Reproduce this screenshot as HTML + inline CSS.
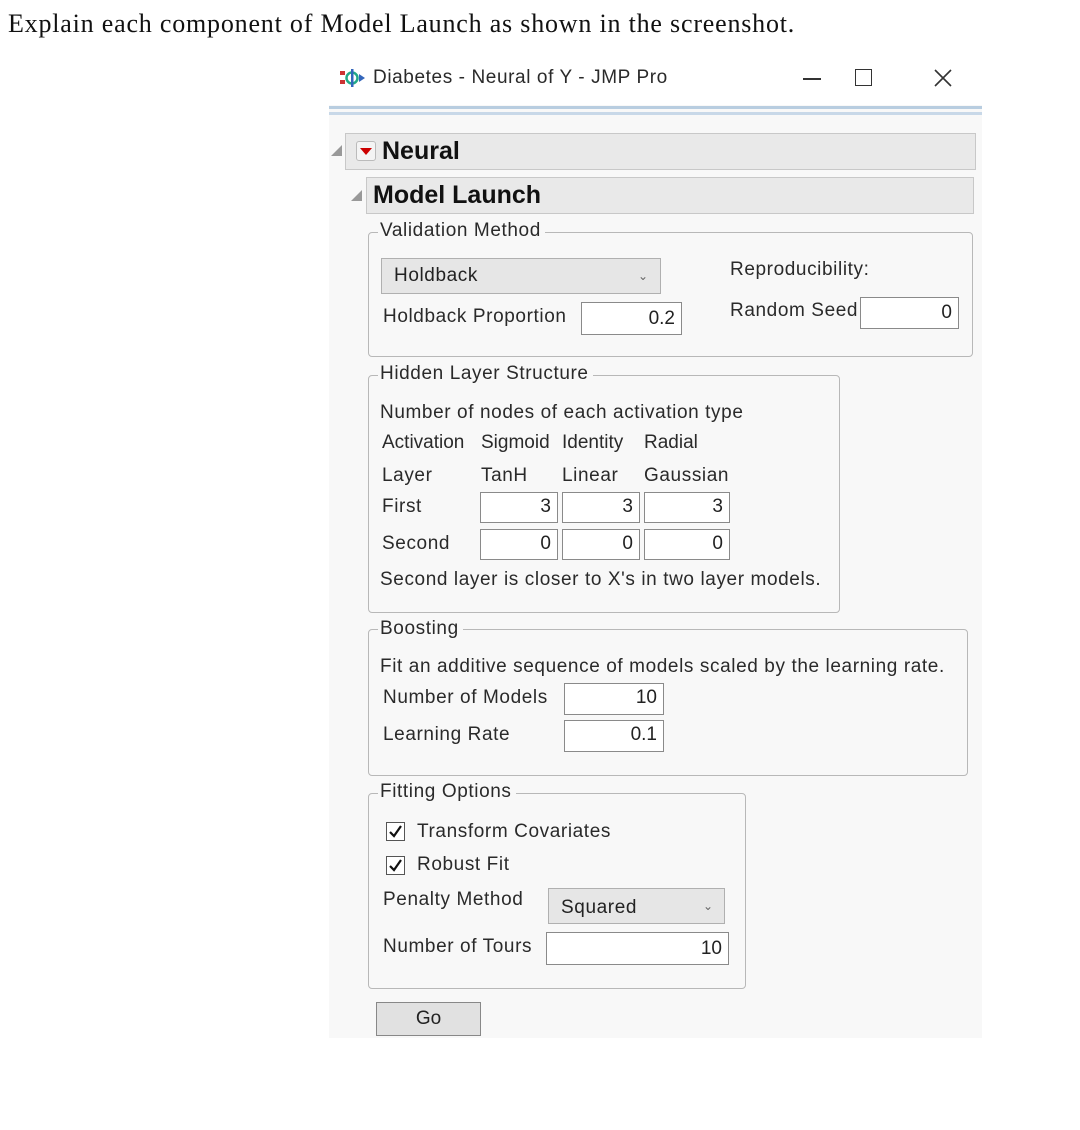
<!DOCTYPE html>
<html><head><meta charset="utf-8"><style>
body{margin:0;width:1080px;height:1130px;background:#fff;position:relative;overflow:hidden;font-family:"Liberation Sans",sans-serif;color:#222}
.a{position:absolute}
.t{position:absolute;font-size:19px;letter-spacing:0.6px;line-height:20px;white-space:nowrap;color:#2a2a2a}
.box{position:absolute;border:1px solid #b8b8b8;border-radius:4px}
.lbl{position:absolute;font-size:19px;letter-spacing:0.6px;line-height:20px;background:#f8f8f8;padding:0 4px 0 2px;white-space:nowrap;color:#2a2a2a}
.in{position:absolute;background:#fff;border:1px solid #8a8a8a;box-sizing:border-box;font-size:19px;text-align:right;padding-right:6px;line-height:28px;color:#222}
.dd{position:absolute;background:#e6e6e6;border:1px solid #b0b0b0;box-sizing:border-box;font-size:19px;letter-spacing:0.6px;padding-left:12px;color:#222}
.hdr{position:absolute;background:#e9e9e9;border:1px solid #c8c8c8;box-sizing:border-box;font-weight:bold;font-size:24px;color:#111}
.cb{position:absolute;width:19px;height:19px;border:1px solid #555;background:#fff;box-sizing:border-box}
.tri{position:absolute;width:0;height:0;border-left:11px solid transparent;border-bottom:11px solid #999}
</style></head><body>
<div class="a" style="left:8px;top:9px;font-family:'Liberation Serif',serif;font-size:26px;letter-spacing:0.8px;color:#111;white-space:nowrap">Explain each component of Model Launch as shown in the screenshot.</div>

<div class="a" style="left:329px;top:58px;width:653px;height:980px;background:#f8f8f8"></div>
<div class="a" style="left:329px;top:58px;width:653px;height:47px;background:#fff"></div>
<svg class="a" style="left:338px;top:66px" width="28" height="24" viewBox="0 0 28 24"><rect x="2" y="5" width="5" height="4" fill="#c33"/><rect x="2" y="14" width="5" height="4" fill="#c33"/><circle cx="14" cy="12" r="5.5" fill="none" stroke="#2a8" stroke-width="2.5"/><rect x="13" y="3" width="2.5" height="18" fill="#36b"/><polygon points="21,8 27,12 21,16" fill="#36b"/></svg>
<div class="t" style="left:373px;top:68px">Diabetes - Neural of Y - JMP Pro</div>
<div class="a" style="left:803px;top:78px;width:18px;height:2px;background:#333"></div>
<div class="a" style="left:855px;top:69px;width:17px;height:17px;border:1.5px solid #333;box-sizing:border-box"></div>
<svg class="a" style="left:933px;top:68px" width="20" height="20"><path d="M2 2L18 18M18 2L2 18" stroke="#333" stroke-width="1.6"/></svg>
<div class="a" style="left:329px;top:106px;width:653px;height:3px;background:#b8cde0"></div>
<div class="a" style="left:329px;top:112px;width:653px;height:3px;background:#c8d8e8"></div>

<div class="tri" style="left:331px;top:145px"></div>
<div class="hdr" style="left:345px;top:133px;width:631px;height:37px"></div>
<div class="a" style="left:356px;top:141px;width:20px;height:20px;border:1px solid #bbb;border-radius:3px;background:#f4f4f4;box-sizing:border-box"></div>
<div class="a" style="left:360px;top:148px;width:0;height:0;border-left:6px solid transparent;border-right:6px solid transparent;border-top:7px solid #c00"></div>
<div class="a" style="left:382px;top:137px;font-weight:bold;font-size:25px;color:#111">Neural</div>

<div class="tri" style="left:351px;top:190px"></div>
<div class="hdr" style="left:366px;top:177px;width:608px;height:37px"></div>
<div class="a" style="left:373px;top:181px;font-weight:bold;font-size:25px;color:#111">Model Launch</div>

<div class="box" style="left:368px;top:232px;width:603px;height:123px"></div>
<div class="lbl" style="left:378px;top:221px">Validation Method</div>
<div class="dd" style="left:381px;top:258px;width:280px;height:36px;line-height:34px">Holdback<span style="position:absolute;left:256px;font-size:12px;color:#666">&#8964;</span></div>
<div class="t" style="left:730px;top:260px">Reproducibility:</div>
<div class="t" style="left:383px;top:307px">Holdback Proportion</div>
<div class="in" style="left:581px;top:302px;width:101px;height:33px;line-height:31px">0.2</div>
<div class="t" style="left:730px;top:301px">Random Seed</div>
<div class="in" style="left:860px;top:297px;width:99px;height:32px;line-height:30px">0</div>

<div class="box" style="left:368px;top:375px;width:470px;height:236px"></div>
<div class="lbl" style="left:378px;top:364px">Hidden Layer Structure</div>
<div class="t" style="left:380px;top:403px">Number of nodes of each activation type</div>
<div class="t" style="left:382px;top:433px;letter-spacing:0">Activation</div>
<div class="t" style="left:481px;top:433px;letter-spacing:0">Sigmoid</div>
<div class="t" style="left:562px;top:433px;letter-spacing:0">Identity</div>
<div class="t" style="left:644px;top:433px;letter-spacing:0">Radial</div>
<div class="t" style="left:382px;top:466px">Layer</div>
<div class="t" style="left:481px;top:466px">TanH</div>
<div class="t" style="left:562px;top:466px">Linear</div>
<div class="t" style="left:644px;top:466px">Gaussian</div>
<div class="t" style="left:382px;top:497px">First</div>
<div class="in" style="left:480px;top:492px;width:78px;height:31px">3</div>
<div class="in" style="left:562px;top:492px;width:78px;height:31px">3</div>
<div class="in" style="left:644px;top:492px;width:86px;height:31px">3</div>
<div class="t" style="left:382px;top:534px">Second</div>
<div class="in" style="left:480px;top:529px;width:78px;height:31px">0</div>
<div class="in" style="left:562px;top:529px;width:78px;height:31px">0</div>
<div class="in" style="left:644px;top:529px;width:86px;height:31px">0</div>
<div class="t" style="left:380px;top:570px">Second layer is closer to X's in two layer models.</div>

<div class="box" style="left:368px;top:629px;width:598px;height:145px"></div>
<div class="lbl" style="left:378px;top:619px">Boosting</div>
<div class="t" style="left:380px;top:657px">Fit an additive sequence of models scaled by the learning rate.</div>
<div class="t" style="left:383px;top:688px">Number of Models</div>
<div class="in" style="left:564px;top:683px;width:100px;height:32px">10</div>
<div class="t" style="left:383px;top:725px">Learning Rate</div>
<div class="in" style="left:564px;top:720px;width:100px;height:32px">0.1</div>

<div class="box" style="left:368px;top:793px;width:376px;height:194px"></div>
<div class="lbl" style="left:378px;top:782px">Fitting Options</div>
<div class="cb" style="left:386px;top:822px"><svg width="17" height="17" style="position:absolute;left:0;top:0"><path d="M3 9L7 13L14 3" fill="none" stroke="#111" stroke-width="2.2"/></svg></div>
<div class="t" style="left:417px;top:822px">Transform Covariates</div>
<div class="cb" style="left:386px;top:856px"><svg width="17" height="17" style="position:absolute;left:0;top:0"><path d="M3 9L7 13L14 3" fill="none" stroke="#111" stroke-width="2.2"/></svg></div>
<div class="t" style="left:417px;top:855px">Robust Fit</div>
<div class="t" style="left:383px;top:890px">Penalty Method</div>
<div class="dd" style="left:548px;top:888px;width:177px;height:36px;line-height:38px">Squared<span style="position:absolute;left:154px;top:-2px;font-size:12px;color:#666">&#8964;</span></div>
<div class="t" style="left:383px;top:937px">Number of Tours</div>
<div class="in" style="left:546px;top:932px;width:183px;height:33px;line-height:31px">10</div>

<div class="a" style="left:376px;top:1002px;width:105px;height:34px;background:#e1e1e1;border:1px solid #888;box-sizing:border-box;text-align:center;font-size:19px;line-height:32px">Go</div>
</body></html>
